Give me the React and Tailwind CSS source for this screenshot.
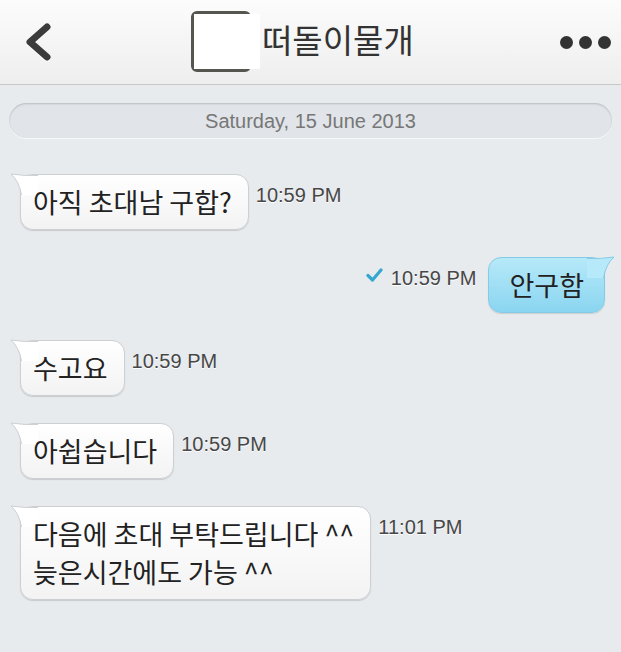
import { Fragment } from 'react'

const messages = [
  { id: 1, side: 'in', text: ['아직 초대남 구합?'], time: '10:59 PM' },
  { id: 2, side: 'out', text: ['안구함'], time: '10:59 PM' },
  { id: 3, side: 'in', text: ['수고요'], time: '10:59 PM' },
  { id: 4, side: 'in', text: ['아쉽습니다'], time: '10:59 PM' },
  { id: 5, side: 'in', text: ['다음에 초대 부탁드립니다 ^^', '늦은시간에도 가능 ^^'], time: '11:01 PM' },
]

function Tail({ fill, stroke, flip }) {
  return (
    <svg
      width="28"
      height="24"
      viewBox="0 0 28 24"
      className={
        flip
          ? 'absolute -right-[11px] -top-[2px] overflow-visible -scale-x-100'
          : 'absolute -left-[11px] -top-[2px] overflow-visible'
      }
    >
      <path d="M28 3 Q14 3 1 1 Q9 8 12 22 L28 22 Z" fill={fill} />
      <path d="M28 2.5 Q14 3 1 1 Q9 8 11.5 22" fill="none" stroke={stroke} strokeWidth="1" />
    </svg>
  )
}

function Time({ children }) {
  return (
    <span className="mt-[11px] text-[20px] leading-none text-[#474747] [text-shadow:0_1px_0_#fff] font-['Liberation_Sans',sans-serif]">
      {children}
    </span>
  )
}

function Bubble({ msg }) {
  const out = msg.side === 'out'
  return (
    <div
      className={
        out
          ? 'relative rounded-[13px] border border-[#86cbe6] bg-gradient-to-b from-[#b6e9f9] to-[#8ad5f0] px-[20px] py-2 shadow-[0_1px_1px_rgba(0,0,0,0.12)]'
          : 'relative rounded-[13px] border border-[#cdd0d3] bg-gradient-to-b from-white to-[#f3f3f3] py-2 pl-3 pr-4 shadow-[0_1px_1px_rgba(0,0,0,0.14)]'
      }
    >
      {out ? <Tail fill="#b6e9f9" stroke="#86cbe6" flip /> : <Tail fill="#ffffff" stroke="#cdd0d3" />}
      <p className="relative text-[27px] leading-[38px] text-[#222] font-['Noto_Sans_CJK_KR','Noto_Sans',sans-serif]">
        {msg.text.map((line, i) => (
          <Fragment key={i}>
            {i > 0 && <br />}
            {line}
          </Fragment>
        ))}
      </p>
    </div>
  )
}

export default function App() {
  return (
    <div className="h-[652px] w-[621px] overflow-hidden bg-[#e8ebee] font-['Liberation_Sans','Noto_Sans_CJK_KR',sans-serif]">
      <header className="flex h-[85px] items-center border-b border-[#c8c8c8] bg-gradient-to-b from-[#fcfcfc] to-[#eeeeee]">
        <div className="w-[191px] pl-[22px]">
          <svg width="32" height="44" viewBox="0 0 32 44" className="drop-shadow-[0_1px_0_#fff]">
            <polyline
              points="25,7 8,22 25,37"
              fill="none"
              stroke="#3b3b3b"
              strokeWidth="7"
              strokeLinecap="round"
              strokeLinejoin="round"
            />
          </svg>
        </div>
        <div className="relative mt-[-2px] h-[61px] w-[60px] rounded-[6px] border-[3px] border-[#55564f] bg-[#8a8a80]">
          <div className="absolute left-0 top-0 h-[55px] w-[66px] bg-white" />
        </div>
        <h1 className="ml-[11px] mt-[-4px] text-[33px] font-normal text-[#333] font-['Noto_Sans_CJK_KR',sans-serif]">
          떠돌이물개
        </h1>
        <div className="ml-auto mr-[10px] flex gap-[6px]">
          <span className="h-[13px] w-[13px] rounded-full bg-[#333]" />
          <span className="h-[13px] w-[13px] rounded-full bg-[#333]" />
          <span className="h-[13px] w-[13px] rounded-full bg-[#333]" />
        </div>
      </header>

      <div className="mx-[9px] mt-[18px] flex h-[35px] items-center justify-center rounded-full bg-[#e1e4e8] shadow-[inset_0_1px_2px_rgba(0,0,0,0.18),0_1px_0_#f7f8f9]">
        <span className="text-[20px] text-[#777]">Saturday, 15 June 2013</span>
      </div>

      <div className="mt-[36px] flex flex-col gap-[27px]">
        {messages.map((msg) =>
          msg.side === 'out' ? (
            <div key={msg.id} className="flex items-start justify-end pr-[16px]">
              <svg width="17" height="15" viewBox="0 0 17 15" className="mr-[8px] mt-[11px]">
                <path d="M2 7.5 L6.5 12 L15 2" fill="none" stroke="#35a8d2" strokeWidth="3.2" strokeLinecap="round" strokeLinejoin="round" />
              </svg>
              <Time>{msg.time}</Time>
              <div className="ml-[12px]">
                <Bubble msg={msg} />
              </div>
            </div>
          ) : (
            <div key={msg.id} className="flex items-start gap-[7px] pl-[20px]">
              <Bubble msg={msg} />
              <Time>{msg.time}</Time>
            </div>
          )
        )}
      </div>
    </div>
  )
}
